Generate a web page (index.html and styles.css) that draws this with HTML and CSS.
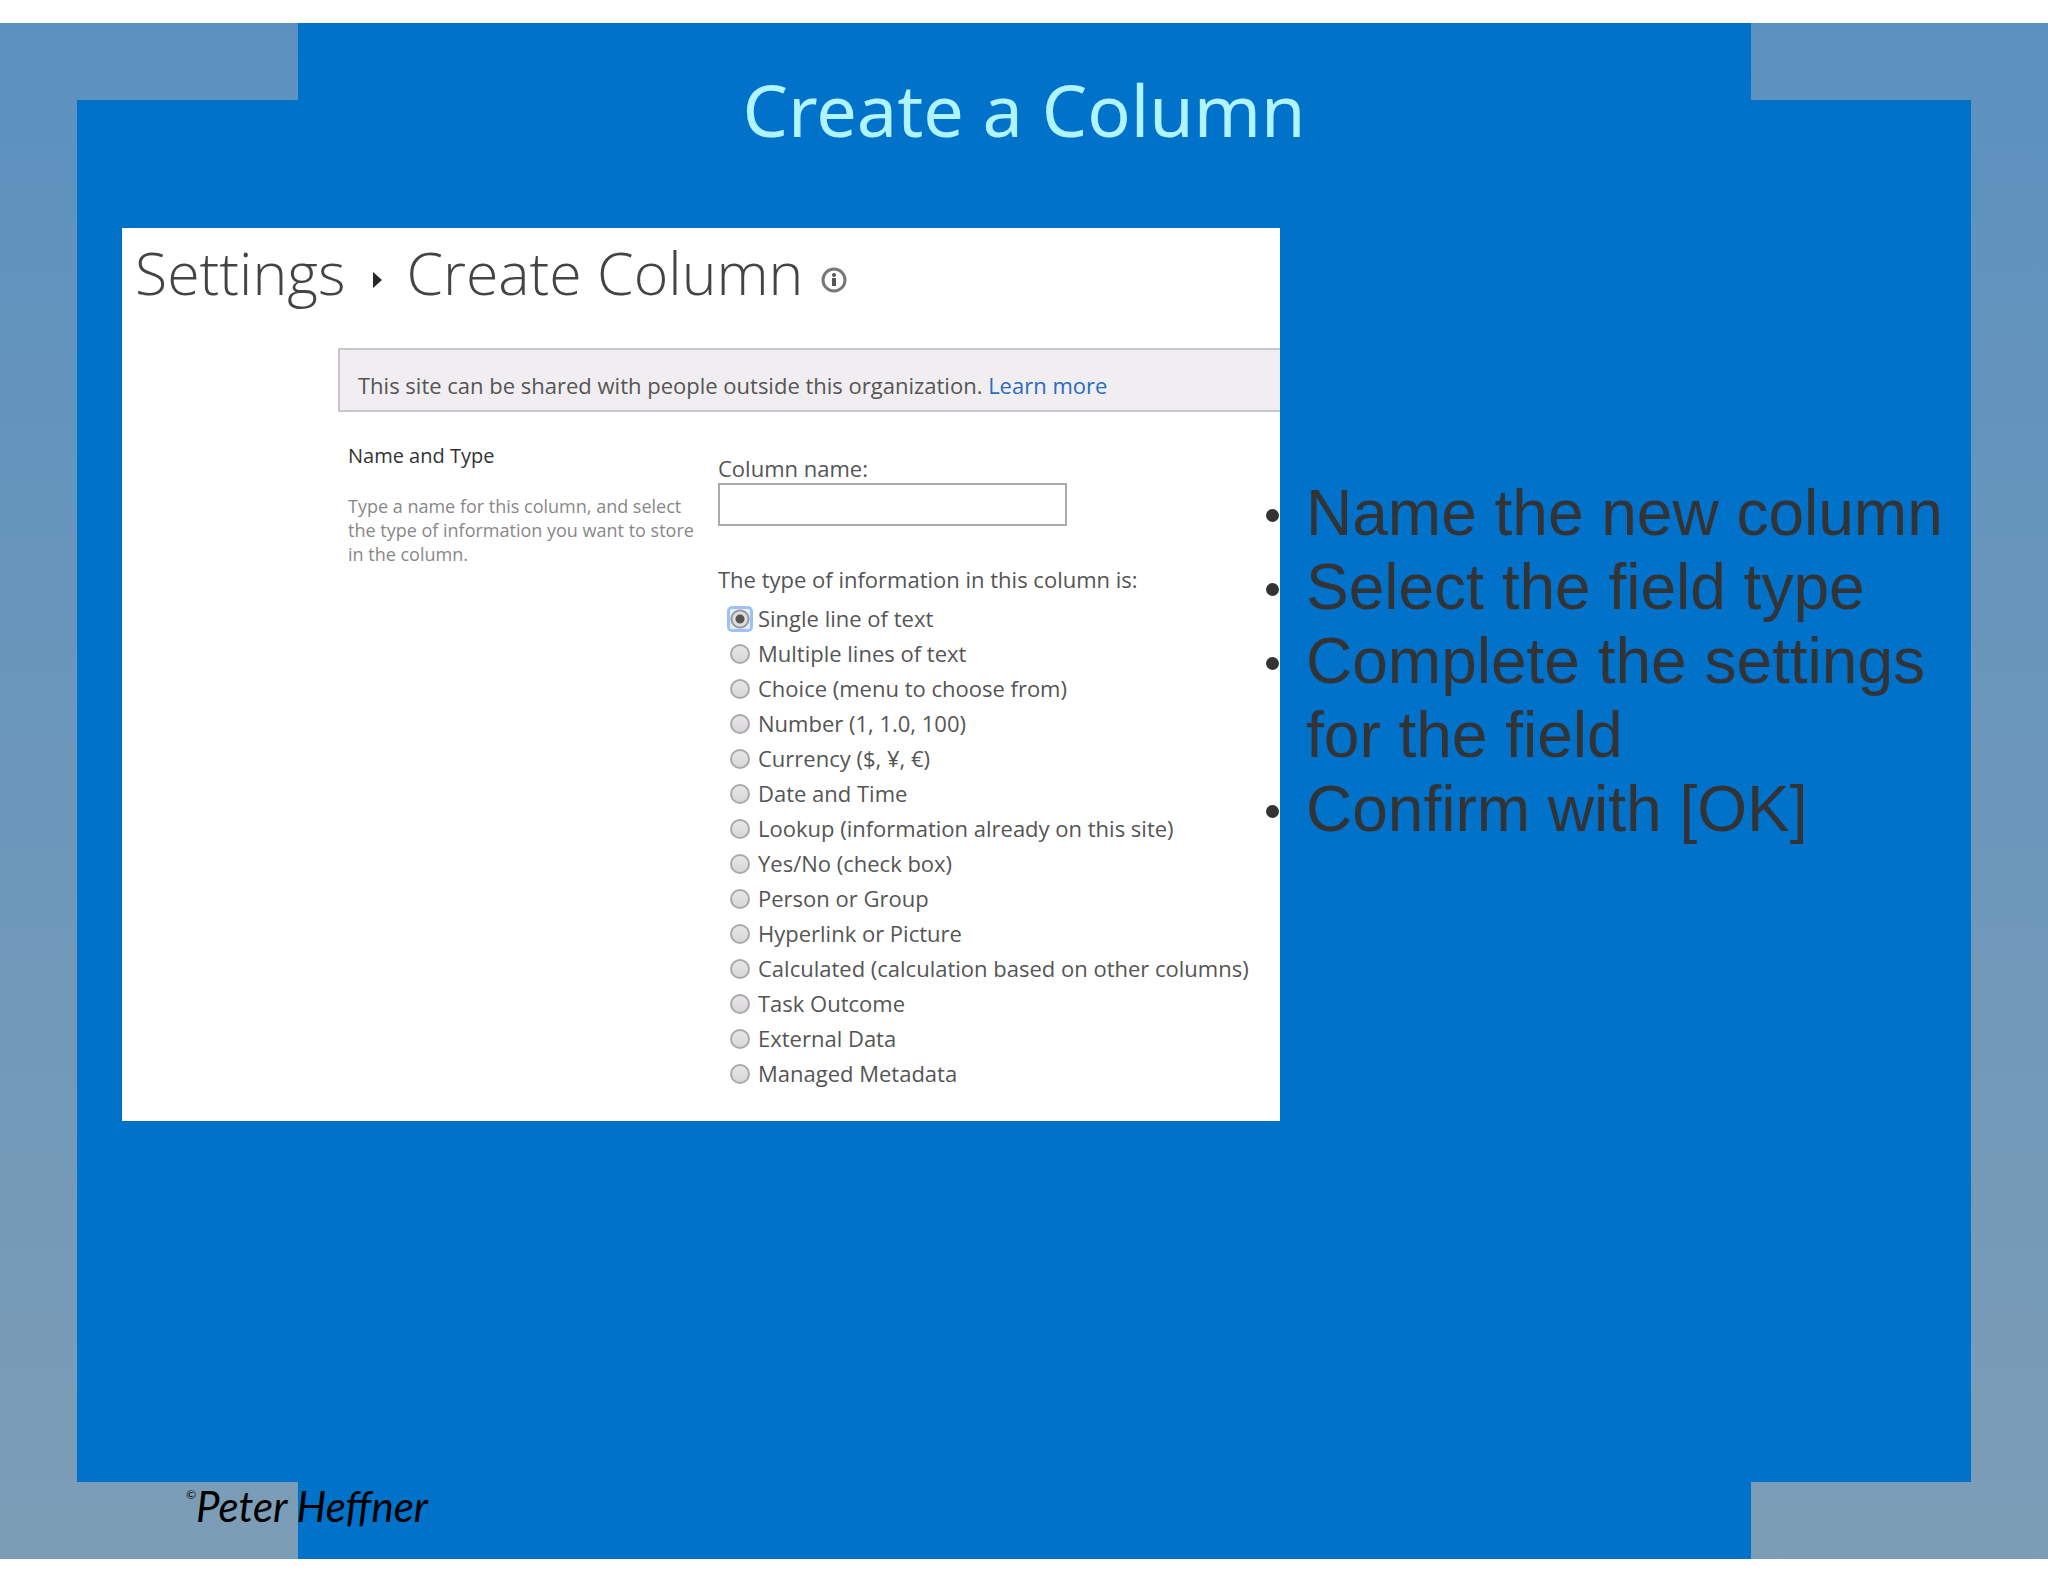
FILE: index.html
```html
<!DOCTYPE html>
<html lang="en">
<head>
<meta charset="UTF-8">
<meta name="viewport" content="width=device-width, initial-scale=1.0">
<title>Create a Column</title>
<link rel="stylesheet" href="styles.css">
</head>
<body>

<div class="slide">
  <header class="slide-header">
    <h1>Create a Column</h1>
  </header>

  <main class="slide-content">
    <form class="panel">
      <h2 class="breadcrumb">
        <span>Settings</span>
        <svg class="arrow" viewBox="0 0 9 16" aria-hidden="true"><path d="M0 0L9 8L0 16Z" fill="#262626"/></svg>
        <span>Create Column</span>
        <svg class="info" viewBox="0 0 26 26" aria-hidden="true">
          <circle cx="13" cy="13" r="11" fill="none" stroke="#777" stroke-width="3"/>
          <circle cx="13" cy="8" r="2" fill="#555"/>
          <path d="M11 11h4v8h-4z" fill="#555"/>
        </svg>
      </h2>

      <p class="notice">This site can be shared with people outside this organization. <a href="#">Learn more</a></p>

      <div class="section">
        <div class="section-info">
          <h3>Name and Type</h3>
          <p>Type a name for this column, and select<br>the type of information you want to store<br>in the column.</p>
        </div>

        <div class="section-fields">
          <label class="field-label" for="columnName">Column name:</label>
          <input type="text" id="columnName" class="text-box">

          <!-- Column types -->
          <fieldset class="types">
            <legend>The type of information in this column is:</legend>
            <label><input type="radio" name="type" checked>Single line of text</label>
            <label><input type="radio" name="type">Multiple lines of text</label>
            <label><input type="radio" name="type">Choice (menu to choose from)</label>
            <label><input type="radio" name="type">Number (1, 1.0, 100)</label>
            <label><input type="radio" name="type">Currency ($, ¥, €)</label>
            <label><input type="radio" name="type">Date and Time</label>
            <label><input type="radio" name="type">Lookup (information already on this site)</label>
            <label><input type="radio" name="type">Yes/No (check box)</label>
            <label><input type="radio" name="type">Person or Group</label>
            <label><input type="radio" name="type">Hyperlink or Picture</label>
            <label><input type="radio" name="type">Calculated (calculation based on other columns)</label>
            <label><input type="radio" name="type">Task Outcome</label>
            <label><input type="radio" name="type">External Data</label>
            <label><input type="radio" name="type">Managed Metadata</label>
          </fieldset>
        </div>
      </div>
    </form>

    <ul class="steps">
      <li>Name the new column</li>
      <li>Select the field type</li>
      <li>Complete the settings for the field</li>
      <li>Confirm with [OK]</li>
    </ul>
  </main>

  <footer class="signature"><small>©</small><span>Peter Heffner</span></footer>
</div>

</body>
</html>
```
FILE: styles.css
```css
* {
  box-sizing: border-box;
}
body {
  margin: 0;
  padding: 23px 0;
  background-color: #fff;
  font-family: "Open Sans", "Noto Sans", sans-serif;
}
h1, h2, h3, p, ul {
  margin: 0;
  padding: 0;
  font-weight: normal;
}

/* blue cross on top of the grey corner brackets */
.slide {
  display: flex;
  flex-direction: column;
  min-height: calc(100vh - 46px);
  background:
    linear-gradient(#0072c9, #0072c9) center / calc(100% - 595px) 100% no-repeat,
    linear-gradient(#0072c9, #0072c9) center / calc(100% - 154px) calc(100% - 154px) no-repeat,
    linear-gradient(#5c91bf, #7c9db6);
}
.slide-header {
  height: 205px;
  padding-top: 36px;
  text-align: center;
}
h1 {
  font-family: "Noto Sans", sans-serif;
  font-size: 72px;
  line-height: 100px;
  color: #b0f4ff;
}
.slide-content {
  display: grid;
  grid-template-columns: 1158fr 691fr;
  align-items: start;
  padding: 0 77px 0 122px;
}

.panel {
  padding: 8px 0 31px 13px;
  background-color: #fff;
  color: #555;
  font-size: 22px;
}
.breadcrumb {
  display: flex;
  align-items: center;
  height: 72px;
  font-size: 59px;
  font-weight: 300;
  line-height: 68px;
  color: #444;
}
.arrow {
  width: 9px;
  height: 16px;
  margin: 16px 24px 0 28px;
}
.info {
  width: 26px;
  height: 26px;
  margin: 16px 0 0 18px;
}
.notice {
  margin: 40px 0 0 203px;
  padding: 10px 18px 0;
  border: 2px solid #c8c6ca;
  border-right: none;
  background-color: #f0eef0;
  line-height: 50px;
}
.notice a {
  color: #2a6cbe;
  text-decoration: none;
}
.section {
  display: grid;
  grid-template-columns: 370px 1fr;
  margin: 28px 0 0 213px;
}
.section-info h3 {
  font-size: 20px;
  line-height: 32px;
  color: #333;
}
.section-info p {
  margin-top: 22px;
  font-size: 18px;
  line-height: 24px;
  color: #888;
}
.field-label {
  display: block;
  margin-top: 14px;
  line-height: 29px;
}
.text-box {
  display: block;
  width: 349px;
  height: 43px;
  border: 2px solid #ababab;
  background-color: #fff;
  font: inherit;
}
.types {
  margin: 36px 0 0;
  padding: 0;
  border: none;
}
.types legend {
  padding: 0;
  line-height: 35px;
  margin-bottom: 3px;
}
.types label {
  display: flex;
  align-items: center;
  height: 35px;
  padding-left: 12px;
}
.types input {
  appearance: none;
  width: 20px;
  height: 20px;
  margin: 3px 8px 0 0;
  border: 2px solid #aaa;
  border-radius: 50%;
  background: linear-gradient(#e8e6e8, #d8d6d8);
}
/* square focus ring round the picked type */
.types input:checked {
  border: none;
  border-radius: 2px;
  background: radial-gradient(circle, #555 4px, #ddd 5px, #ddd 7px, #999 8px, #999 9px, #e8f0fc 10px);
  outline: 3px solid #9dc1f7;
}

.steps {
  margin-top: 248px;
  padding-left: 26px;
  list-style: none;
  font-family: "Liberation Sans", Arial, sans-serif;
  font-size: 64px;
  line-height: 74px;
  color: #333335;
}
.steps li {
  position: relative;
}
.steps li::before {
  content: "";
  position: absolute;
  top: 33px;
  left: -40px;
  width: 13px;
  height: 13px;
  border-radius: 50%;
  background-color: #333335;
}

.signature {
  display: flex;
  align-items: flex-start;
  height: 77px;
  margin-top: auto;
  padding-left: 186px;
  font-family: "Lato", cursive;
  font-size: 42px;
  font-style: italic;
  line-height: 48px;
  color: #000;
}
.signature small {
  font-size: 12px;
  line-height: 26px;
}
```
